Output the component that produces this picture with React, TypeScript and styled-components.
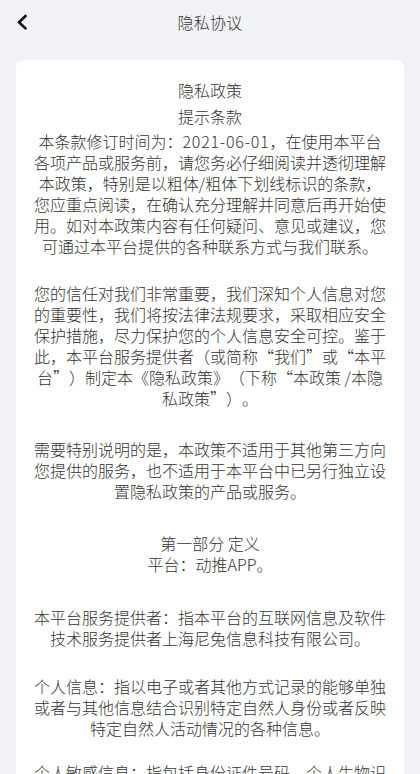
import styled, { createGlobalStyle } from "styled-components";

const GlobalStyle = createGlobalStyle`
  html, body {
    margin: 0;
    padding: 0;
    background: #f1f2f7;
  }
  body {
    font-family: "Noto Sans CJK SC", "Noto Sans", sans-serif;
    color: #333;
    text-spacing-trim: space-all;
  }
`;

type Block = { lines: string[]; gap: number };

const blocks: Block[] = [
  {
    gap: 2,
    lines: [
      "本条款修订时间为：2021-06-01，在使用本平台各项产品或服务前，请您务必仔细阅读并透彻理解本政策，特别是以粗体/粗体下划线标识的条款，您应重点阅读，在确认充分理解并同意后再开始使用。如对本政策内容有任何疑问、意见或建议，您可通过本平台提供的各种联系方式与我们联系。",
    ],
  },
  {
    gap: 26,
    lines: [
      "您的信任对我们非常重要，我们深知个人信息对您的重要性，我们将按法律法规要求，采取相应安全保护措施，尽力保护您的个人信息安全可控。鉴于此，本平台服务提供者（或简称“我们”或“本平台”）制定本《隐私政策》（下称“本政策 /本隐私政策”）。",
    ],
  },
  {
    gap: 30,
    lines: [
      "需要特别说明的是，本政策不适用于其他第三方向您提供的服务，也不适用于本平台中已另行独立设置隐私政策的产品或服务。",
    ],
  },
  { gap: 31, lines: ["第一部分 定义", "平台：动推APP。"] },
  {
    gap: 32,
    lines: [
      "本平台服务提供者：指本平台的互联网信息及软件技术服务提供者上海尼兔信息科技有限公司。",
    ],
  },
  {
    gap: 27,
    lines: [
      "个人信息：指以电子或者其他方式记录的能够单独或者与其他信息结合识别特定自然人身份或者反映特定自然人活动情况的各种信息。",
    ],
  },
  {
    gap: 23,
    lines: [
      "个人敏感信息：指包括身份证件号码、个人生物识别信息、银行账号、财产信息、行踪轨迹、交易信息、14岁以下（含）儿童信息等的个人信息。",
    ],
  },
];

// wider latin run so the date takes the same room as in the app's font
const renderLine = (text: string) => {
  const parts = text.split(/(2021-06-01)/);
  return parts.map((p, k) =>
    p === "2021-06-01" ? <Latin key={k}>{p}</Latin> : p
  );
};

const App = function App(): JSX.Element {
  return (
    <>
      <GlobalStyle />
      <Page>
        <Header>
          <BackButton aria-label="返回">
            <svg width="14" height="16" viewBox="0 0 14 16">
              <polyline
                points="10.5,2 4,8.2 10.5,14.4"
                fill="none"
                stroke="#111"
                strokeWidth="2.6"
                strokeLinecap="round"
                strokeLinejoin="round"
              />
            </svg>
          </BackButton>
          <Title>隐私协议</Title>
        </Header>
        <Card>
          <Heading>隐私政策</Heading>
          <Heading>提示条款</Heading>
          {blocks.map((b, i) => (
            <Paragraph key={i} $gap={b.gap}>
              {b.lines.map((l, j) => (
                <Line key={j}>{renderLine(l)}</Line>
              ))}
            </Paragraph>
          ))}
        </Card>
      </Page>
    </>
  );
};

const Page = styled.div`
  height: 774px;
  overflow: hidden;
  background: #f1f2f7;
  display: flex;
  flex-direction: column;
`;

const Header = styled.div`
  height: 44px;
  flex-shrink: 0;
  display: flex;
  align-items: center;
  justify-content: center;
  position: relative;
`;

const BackButton = styled.div`
  position: absolute;
  left: 14px;
  top: 14px;
  width: 16px;
  height: 16px;
  display: flex;
  align-items: center;
  justify-content: center;
`;

const Title = styled.div`
  font-size: 16px;
  font-weight: 300;
  color: #333;
  letter-spacing: 0.3px;
`;

const Card = styled.div`
  margin: 16px 16px 0;
  background: #fff;
  border-radius: 8px;
  padding: 17px 16px 16px;
  text-align: center;
  font-size: 16px;
  font-weight: 300;
  color: #333;
`;

const Heading = styled.div`
  line-height: 26px;
`;

const Paragraph = styled.div<{ $gap: number }>`
  margin-top: ${(p) => p.$gap}px;
  line-height: 21px;
`;

const Line = styled.div``;

const Latin = styled.span`
  letter-spacing: 0.8px;
`;

export default App;
